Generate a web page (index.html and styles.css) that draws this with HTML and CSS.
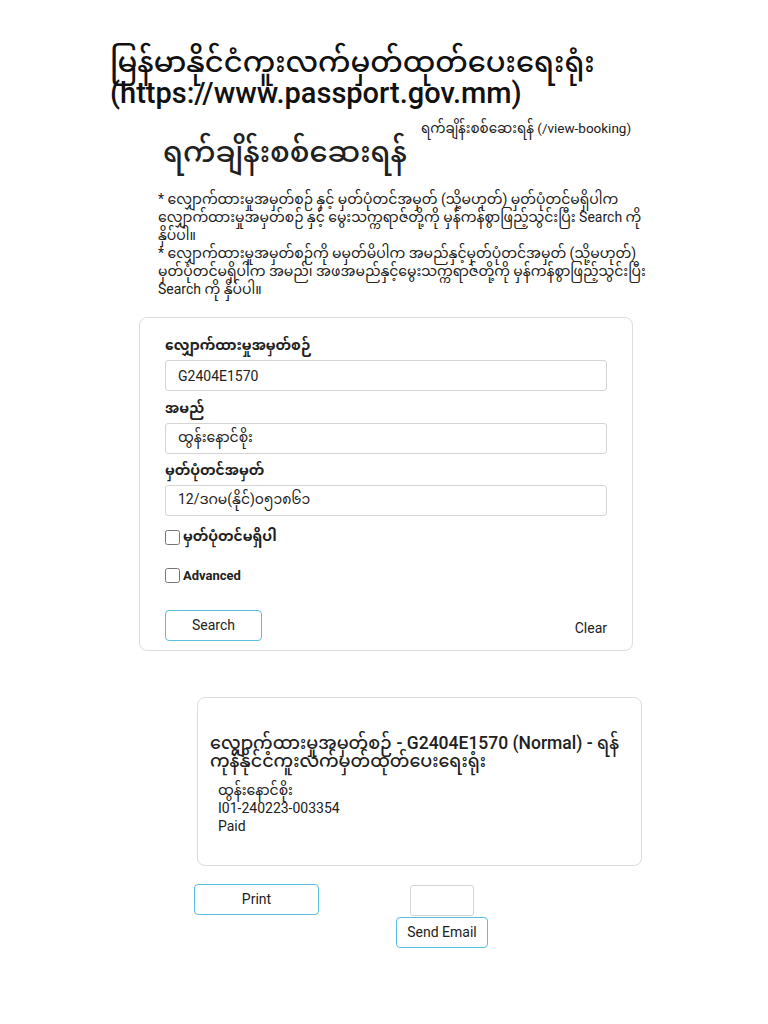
FILE: index.html
```html
<!DOCTYPE html>
<html lang="my">
<head>
  <meta charset="UTF-8">
  <meta name="viewport" content="width=device-width, initial-scale=1.0">
  <title>ရက်ချိန်းစစ်ဆေးရန်</title>
  <link rel="stylesheet" href="styles.css">
</head>
<body>

    <h1 class="site-title">မြန်မာနိုင်ငံကူးလက်မှတ်ထုတ်ပေးရေးရုံး<br>(https://www.passport.gov.mm)</h1>

    <div class="page">
        <div class="page-head">
            <h2 class="page-title">ရက်ချိန်းစစ်ဆေးရန်</h2>
            <span class="crumb">ရက်ချိန်းစစ်ဆေးရန် (/view-booking)</span>
        </div>

        <p class="help">
            * လျှောက်ထားမှုအမှတ်စဉ် နှင့် မှတ်ပုံတင်အမှတ် (သို့မဟုတ်) မှတ်ပုံတင်မရှိပါက လျှောက်ထားမှုအမှတ်စဉ် နှင့် မွေးသက္ကရာဇ်တို့ကို မှန်ကန်စွာဖြည့်သွင်းပြီး Search ကို နှိပ်ပါ။<br>
            * လျှောက်ထားမှုအမှတ်စဉ်ကို မမှတ်မိပါက အမည်နှင့်မှတ်ပုံတင်အမှတ် (သို့မဟုတ်) မှတ်ပုံတင်မရှိပါက အမည်၊ အဖအမည်နှင့်မွေးသက္ကရာဇ်တို့ကို မှန်ကန်စွာဖြည့်သွင်းပြီး Search ကို နှိပ်ပါ။
        </p>

        <form class="card search-form">
            <label class="field-label" for="appNo">လျှောက်ထားမှုအမှတ်စဉ်</label>
            <input class="field" id="appNo" type="text" value="G2404E1570">

            <label class="field-label" for="name">အမည်</label>
            <input class="field" id="name" type="text" value="ထွန်းနောင်စိုး">

            <label class="field-label" for="nrc">မှတ်ပုံတင်အမှတ်</label>
            <input class="field" id="nrc" type="text" value="12/ဒဂမ(နိုင်)၀၅၁၈၆၁">

            <label class="check check-nrc"><input type="checkbox"> မှတ်ပုံတင်မရှိပါ</label>
            <label class="check check-adv"><input type="checkbox"> Advanced</label>

            <div class="form-actions">
                <button type="button" class="btn">Search</button>
                <a class="link-btn">Clear</a>
            </div>
        </form>

        <div class="card result">
            <h3 class="result-title">လျှောက်ထားမှုအမှတ်စဉ် - G2404E1570 (Normal) - ရန်ကုန်နိုင်ငံကူးလက်မှတ်ထုတ်ပေးရေးရုံး</h3>
            <div class="result-line">ထွန်းနောင်စိုး</div>
            <div class="result-line">I01-240223-003354</div>
            <div class="result-line">Paid</div>
        </div>

        <div class="result-actions">
            <button type="button" class="btn btn-print">Print</button>
            <div class="email-box">
                <input class="email-input" type="text">
                <button type="button" class="btn btn-email">Send Email</button>
            </div>
        </div>
    </div>

</body>
</html>
```

FILE: styles.css
```css
body {
    margin: 0;
    background-color: white;
    color: #212121;
    font-family: Roboto, "Noto Sans Myanmar", "Noto Sans", sans-serif;
}

.site-title {
    margin: 47px 0 0 110px;
    font-size: 29px;
    font-weight: 500;
    line-height: 31px;
    color: #111;
}

.page {
    margin-left: 139px;
    width: 494px;
}

.page-head {
    display: flex;
    align-items: flex-start;
    margin-top: 10px;
    padding-left: 24px;
}

.page-title {
    margin: 15px 14px 0 0;
    font-size: 29px;
    font-weight: 500;
    line-height: 36px;
}

.crumb {
    font-size: 13.5px;
    line-height: 18px;
}

.help {
    margin: 20px -18px 0 19px;
    font-size: 14px;
    line-height: 18px;
}

.card {
    border: 1px solid #dcdcdc;
    border-radius: 8px;
    box-sizing: border-box;
}

.search-form {
    margin-top: 19px;
    padding: 16px 25px 9px 25px;
    display: flex;
    flex-direction: column;
}

.field-label {
    font-size: 14px;
    font-weight: bold;
    line-height: 22px;
}

.field {
    height: 31px;
    box-sizing: border-box;
    margin: 4px 0 5.5px 0;
    padding: 0 12px;
    border: 1px solid #d4d4d4;
    border-radius: 3px;
    font-family: inherit;
    font-size: 14px;
    color: #222;
}

.check {
    display: flex;
    align-items: center;
    font-size: 14px;
    font-weight: bold;
}

.check input {
    margin: 0 3px 0 0;
    width: 15px;
    height: 15px;
}

.check-nrc {
    margin-top: 0;
}

.check-adv {
    margin-top: 15px;
    font-size: 13px;
}

.form-actions {
    display: flex;
    justify-content: space-between;
    align-items: flex-end;
    margin-top: 27px;
}

.btn {
    height: 31px;
    background: white;
    border: 1px solid #5bc0de;
    border-radius: 4px;
    font-family: inherit;
    font-size: 14px;
    color: #222;
}

.form-actions .btn {
    width: 97px;
}

.link-btn {
    font-size: 14px;
    padding-bottom: 5px;
}

.result {
    margin: 46px 0 0 58px;
    width: 445px;
    height: 169px;
    padding: 36px 12px 0 12px;
}

.result-title {
    margin: 0 0 11px 0;
    font-size: 17.5px;
    font-weight: 500;
    line-height: 18px;
}

.result-line {
    margin-left: 8px;
    font-size: 14px;
    line-height: 18px;
}

.result-actions {
    display: flex;
    align-items: flex-start;
    margin: 18px 0 0 55px;
}

.btn-print {
    width: 125px;
}

.email-box {
    display: flex;
    flex-direction: column;
    align-items: center;
    margin: 1px 0 0 77px;
}

.email-input {
    width: 64px;
    height: 31px;
    box-sizing: border-box;
    border: 1px solid #d4d4d4;
    border-radius: 3px;
}

.btn-email {
    width: 92px;
    margin-top: 1px;
}
```
